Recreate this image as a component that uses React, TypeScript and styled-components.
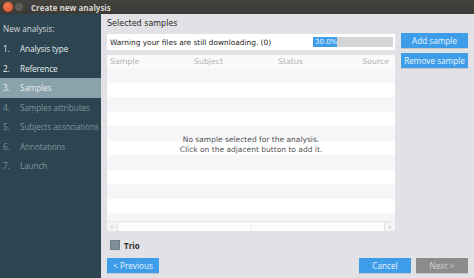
import React from "react";
import styled, { createGlobalStyle } from "styled-components";

const Global = createGlobalStyle`
  html, body { margin: 0; padding: 0; overflow: hidden; background: #e2e2e6; }
  #root { width: 474px; height: 278px; }
  * { box-sizing: border-box; }
`;

const Window = styled.div`
  width: 474px;
  height: 278px;
  display: flex;
  flex-direction: column;
  font-family: "DejaVu Sans", sans-serif;
`;

const TitleBar = styled.div`
  height: 14px;
  flex: none;
  display: flex;
  align-items: center;
  padding-left: 3px;
  gap: 2px;
  background: linear-gradient(#45433f, #3a3935);
`;

const WinButton = styled.span<{ $close?: boolean }>`
  width: ${(p) => (p.$close ? 10 : 8)}px;
  height: ${(p) => (p.$close ? 10 : 8)}px;
  border-radius: 50%;
  background: ${(p) => (p.$close ? "radial-gradient(circle at 40% 35%, #f27a4f, #d9512b)" : "#5c5b57")};
  margin-right: ${(p) => (p.$close ? 0 : 6)}px;
`;

const Title = styled.span`
  font-family: "Open Sans", sans-serif;
  font-weight: 700;
  font-size: 8px;
  color: #d6d5d0;
`;

const Body = styled.div`
  flex: 1;
  display: flex;
  min-height: 0;
`;

const Sidebar = styled.div`
  width: 101px;
  flex: none;
  background: #2c4550;
  padding-top: 5px;
  font-family: "Open Sans", sans-serif;
  font-size: 8.2px;
  overflow: hidden;
`;

const SideHeading = styled.div`
  height: 20px;
  line-height: 20px;
  padding-left: 3px;
  color: #d3dadd;
`;

const Step = styled.div<{ $state: "done" | "current" | "todo" }>`
  height: 19.5px;
  display: flex;
  align-items: center;
  padding-left: 3px;
  white-space: nowrap;
  letter-spacing: -0.1px;
  color: ${(p) => (p.$state === "todo" ? "#7f949c" : "#e6ecee")};
  background: ${(p) => (p.$state === "current" ? "#8aa2ab" : "transparent")};
`;

const StepNum = styled.span`
  width: 17px;
  flex: none;
`;

const Main = styled.div`
  flex: 1;
  display: flex;
  flex-direction: column;
  padding: 0 6px 5px 6px;
  background: #e2e2e6;
`;

const SectionTitle = styled.div`
  height: 19px;
  line-height: 20px;
  font-size: 8px;
  color: #2a2a2a;
`;

const ContentRow = styled.div`
  display: flex;
  gap: 6px;
`;

const LeftCol = styled.div`
  width: 288px;
  display: flex;
  flex-direction: column;
`;

const WarningBox = styled.div`
  margin-top: 1px;
  height: 16px;
  background: #ffffff;
  display: flex;
  align-items: center;
  padding: 0 2px 0 3px;
  font-size: 7.4px;
  color: #1e1e1e;
`;

const WarningText = styled.span`
  flex: 1;
`;

const Progress = styled.div`
  width: 80px;
  height: 10px;
  background: #d5d5d8;
  display: flex;
`;

const ProgressFill = styled.div`
  background: #3e9de8;
  color: #e8f3fd;
  font-size: 7px;
  line-height: 10px;
  padding-left: 2px;
  overflow: hidden;
  white-space: nowrap;
`;

const Table = styled.div`
  margin-top: 5px;
  height: 176px;
  background: #ffffff;
  display: flex;
  flex-direction: column;
  position: relative;
`;

const HeaderRow = styled.div`
  height: 13px;
  flex: none;
  display: grid;
  grid-template-columns: 84px 84px 84px 1fr;
  padding-left: 3px;
  align-items: center;
  font-size: 7.8px;
  color: #b0b0b3;
  background: #fafafb;
`;

const HeaderCell = styled.span<{ $right?: boolean }>`
  text-align: ${(p) => (p.$right ? "right" : "left")};
  padding-right: ${(p) => (p.$right ? 6 : 0)}px;
`;

const Rows = styled.div`
  flex: 1;
  display: flex;
  flex-direction: column;
  overflow: hidden;
`;

const Row = styled.div<{ $odd: boolean }>`
  height: 14.5px;
  flex: none;
  background: ${(p) => (p.$odd ? "#f6f6f8" : "#ffffff")};
`;

const EmptyMsg = styled.div`
  position: absolute;
  left: 0;
  right: 0;
  top: 80px;
  text-align: center;
  font-size: 7.5px;
  line-height: 9.5px;
  color: #555;
`;

const ScrollBar = styled.div`
  height: 10px;
  flex: none;
  display: flex;
  align-items: stretch;
  border-top: 1px solid #e6e6e8;
  background: #f4f4f5;
  font-size: 7px;
  color: #a0a0a0;
`;

const ScrollArrow = styled.span`
  width: 10px;
  display: flex;
  align-items: center;
  justify-content: center;
`;

const ScrollThumb = styled.div`
  flex: 1;
  border-left: 1px solid #e2e2e4;
  border-right: 1px solid #e2e2e4;
  background: #fbfbfb;
  display: flex;
  align-items: center;
  justify-content: center;
  color: #c8c8c8;
  font-size: 6px;
`;

const RightCol = styled.div`
  width: 67px;
  display: flex;
  flex-direction: column;
  gap: 5px;
`;

const Button = styled.button<{ $variant?: "blue" | "gray" }>`
  height: 15px;
  border: none;
  padding: 0;
  font-family: "Open Sans", sans-serif;
  font-size: 8.2px;
  color: ${(p) => (p.$variant === "gray" ? "#d4d4d4" : "#e9f4fe")};
  background: ${(p) => (p.$variant === "gray" ? "#8b8b8b" : "#3e9de8")};
  box-shadow: 0 1px 0 rgba(0, 0, 0, 0.12);
`;

const TrioRow = styled.div`
  margin-top: 9px;
  height: 10px;
  display: flex;
  align-items: center;
  gap: 4px;
  padding-left: 3px;
`;

const Check = styled.span`
  width: 10px;
  height: 10px;
  background: #7f909c;
  border: 1px solid #6f808c;
`;

const TrioLabel = styled.span`
  font-family: "Open Sans", sans-serif;
  font-weight: 700;
  font-size: 8px;
  color: #2b2b2b;
`;

const Footer = styled.div`
  margin-top: auto;
  display: flex;
  gap: 5px;
`;

const Spacer = styled.div`
  flex: 1;
`;

const FooterButton = styled(Button)`
  width: 52px;
`;

const steps: { n: string; label: string; state: "done" | "current" | "todo" }[] = [
  { n: "1.", label: "Analysis type", state: "done" },
  { n: "2.", label: "Reference", state: "done" },
  { n: "3.", label: "Samples", state: "current" },
  { n: "4.", label: "Samples attributes", state: "todo" },
  { n: "5.", label: "Subjects associations", state: "todo" },
  { n: "6.", label: "Annotations", state: "todo" },
  { n: "7.", label: "Launch", state: "todo" },
];

export default function App() {
  const progress = 30;
  return (
    <>
      <Global />
      <Window>
        <TitleBar>
          <WinButton $close />
          <WinButton />
          <Title>Create new analysis</Title>
        </TitleBar>
        <Body>
          <Sidebar>
            <SideHeading>New analysis:</SideHeading>
            {steps.map((s) => (
              <Step key={s.n} $state={s.state}>
                <StepNum>{s.n}</StepNum>
                {s.label}
              </Step>
            ))}
          </Sidebar>
          <Main>
            <SectionTitle>Selected samples</SectionTitle>
            <ContentRow>
              <LeftCol>
                <WarningBox>
                  <WarningText>Warning your files are still downloading. (0)</WarningText>
                  <Progress>
                    <ProgressFill style={{ width: `${progress}%` }}>30.0%</ProgressFill>
                  </Progress>
                </WarningBox>
                <Table>
                  <HeaderRow>
                    <HeaderCell>Sample</HeaderCell>
                    <HeaderCell>Subject</HeaderCell>
                    <HeaderCell>Status</HeaderCell>
                    <HeaderCell $right>Source</HeaderCell>
                  </HeaderRow>
                  <Rows>
                    {Array.from({ length: 11 }).map((_, i) => (
                      <Row key={i} $odd={i % 2 === 0} />
                    ))}
                  </Rows>
                  <EmptyMsg>
                    No sample selected for the analysis.
                    <br />
                    Click on the adjacent button to add it.
                  </EmptyMsg>
                  <ScrollBar>
                    <ScrollArrow>‹</ScrollArrow>
                    <ScrollThumb>⁝</ScrollThumb>
                    <ScrollArrow>›</ScrollArrow>
                  </ScrollBar>
                </Table>
              </LeftCol>
              <RightCol>
                <Button>Add sample</Button>
                <Button>Remove sample</Button>
              </RightCol>
            </ContentRow>
            <TrioRow>
              <Check />
              <TrioLabel>Trio</TrioLabel>
            </TrioRow>
            <Footer>
              <FooterButton>&lt; Previous</FooterButton>
              <Spacer />
              <FooterButton>Cancel</FooterButton>
              <FooterButton $variant="gray">Next &gt;</FooterButton>
            </Footer>
          </Main>
        </Body>
      </Window>
    </>
  );
}
